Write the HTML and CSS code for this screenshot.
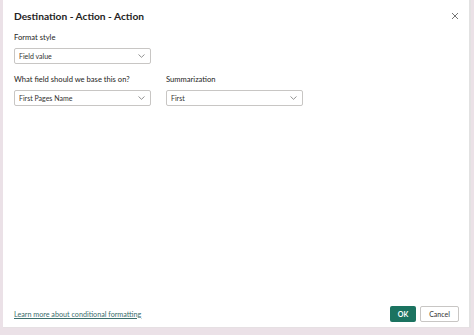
FILE: index.html
```html
<!DOCTYPE html>
<html lang="en">
<head>
  <meta charset="UTF-8" />
  <meta name="viewport" content="width=device-width, initial-scale=1.0"/>
  <title>Destination - Action - Action</title>
  <link rel="stylesheet" href="styles.css">
</head>
<body>
  <div class="dialog">
    <div class="header">
      <h2>Destination - Action - Action</h2>
      <button class="close" type="button" aria-label="Close">
        <svg width="8" height="8" viewBox="0 0 8 8"><path d="M1 1L7 7M7 1L1 7" stroke="#666" stroke-width="0.9" fill="none"/></svg>
      </button>
    </div>

    <div class="form-group">
      <label>Format style</label>
      <div class="select">
        <span>Field value</span>
        <svg class="chevron" width="7" height="4" viewBox="0 0 7 4"><path d="M0.5 0.5L3.5 3.3L6.5 0.5" stroke="#777" stroke-width="0.8" fill="none"/></svg>
      </div>
    </div>

    <div class="row">
      <div class="form-group">
        <label>What field should we base this on?</label>
        <div class="select">
          <span>First Pages Name</span>
          <svg class="chevron" width="7" height="4" viewBox="0 0 7 4"><path d="M0.5 0.5L3.5 3.3L6.5 0.5" stroke="#777" stroke-width="0.8" fill="none"/></svg>
        </div>
      </div>
      <div class="form-group">
        <label>Summarization</label>
        <div class="select">
          <span>First</span>
          <svg class="chevron" width="7" height="4" viewBox="0 0 7 4"><path d="M0.5 0.5L3.5 3.3L6.5 0.5" stroke="#777" stroke-width="0.8" fill="none"/></svg>
        </div>
      </div>
    </div>

    <div class="footer">
      <a href="#" class="learn">Learn more about conditional formatting</a>
      <div class="buttons">
        <button type="button" class="btn btn-ok">OK</button>
        <button type="button" class="btn btn-cancel">Cancel</button>
      </div>
    </div>
  </div>
</body>
</html>
```

FILE: styles.css
```css
body {
  margin: 0;
  background: #ebe1e7;
  font-family: Lato, "Open Sans", sans-serif;
  color: #252423;
}
.dialog {
  margin-left: 3px;
  width: 468px;
  height: 328px;
  box-sizing: border-box;
  background: #fff;
  border-right: 2px solid #e2e2e2;
  border-bottom: 1px solid #e6e0e3;
  padding: 9px 10px 5px 11px;
  display: flex;
  flex-direction: column;
}
.header {
  display: flex;
  justify-content: space-between;
  align-items: center;
  height: 14px;
}
.header h2 {
  margin: 0;
  font-size: 10.2px;
  font-weight: 700;
  color: #252423;
}
.close {
  border: none;
  background: none;
  padding: 0;
  width: 8px;
  height: 8px;
  display: flex;
}
.form-group {
  display: flex;
  flex-direction: column;
  width: 137px;
}
.form-group label {
  font-size: 7.6px;
  color: #252423;
  margin-top: 8.5px;
  height: 11px;
  line-height: 11px;
  margin-bottom: 5.5px;
}
.row {
  display: flex;
  gap: 15px;
  margin-top: 1px;
}
.select {
  height: 16px;
  box-sizing: border-box;
  border: 1px solid #c8c6c4;
  border-radius: 2px;
  display: flex;
  align-items: center;
  justify-content: space-between;
  padding: 0 5px 0 4px;
  font-size: 7px;
  color: #323130;
}
.footer {
  margin-top: auto;
  display: flex;
  justify-content: space-between;
  align-items: center;
}
.learn {
  font-size: 7.2px;
  color: #3b6e6c;
  text-decoration: underline;
}
.buttons {
  display: flex;
  gap: 4px;
}
.btn {
  height: 16px;
  font-family: inherit;
  font-size: 7px;
  border-radius: 2px;
  padding: 0;
  cursor: pointer;
}
.btn-ok {
  width: 26px;
  background: #1b7360;
  color: #fff;
  border: none;
  font-weight: 700;
}
.btn-cancel {
  width: 39px;
  background: #fff;
  color: #323130;
  border: 1px solid #c8c6c4;
}
```
